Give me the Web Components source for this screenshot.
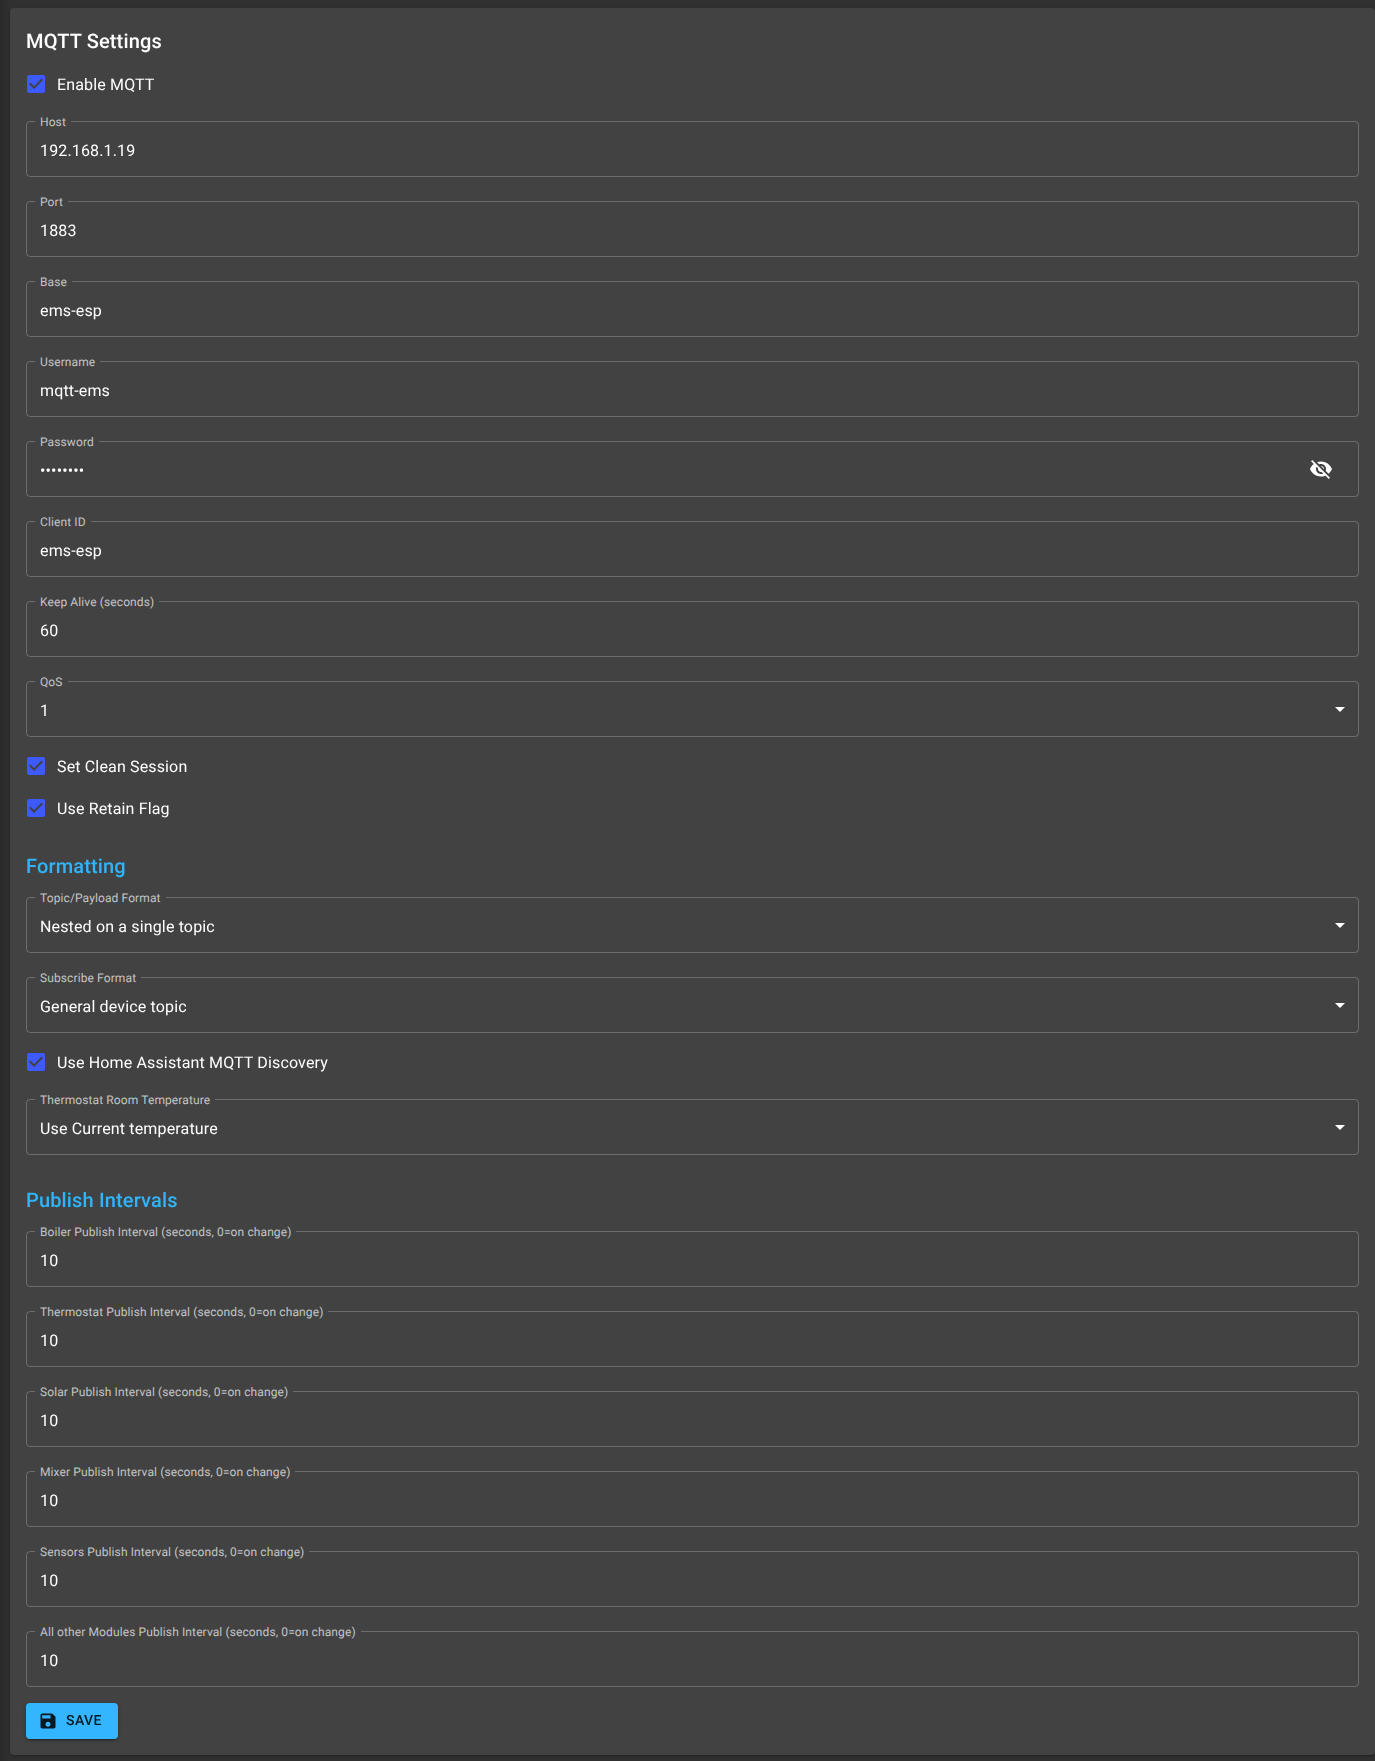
<!DOCTYPE html>
<html>
<head>
<meta charset="utf-8">
<title>MQTT Settings</title>
<style>
  html, body { margin: 0; padding: 0; background: #303030; }
  body { font-family: Roboto, "Liberation Sans", sans-serif; color: #fff; text-rendering: geometricPrecision; }
</style>
</head>
<body>
<mqtt-settings></mqtt-settings>

<script>
class OutlinedField extends HTMLElement {
  constructor() {
    super();
    this.attachShadow({mode: 'open'}).innerHTML = `
      <style>
        :host { display: block; position: relative; flex: none; height: 56px; box-sizing: border-box; margin: 16px 0 8px; border: 1px solid rgba(255,255,255,0.23); border-radius: 4px; }
        .label { position: absolute; left: 8px; top: -7px; padding: 0 5px; background: #424242; font-size: 12px; line-height: 14px; letter-spacing: 0.11px; color: rgba(255,255,255,0.7); white-space: nowrap; }
        .row { display: flex; align-items: center; height: 100%; padding: 2px 6px 0 13px; box-sizing: border-box; }
        .value { flex: 1; font-size: 16px; line-height: 19px; color: #fff; letter-spacing: 0.15px; white-space: nowrap; }
        .end { display: block; margin-top: -2px; }
      </style>
      <span class="label"></span>
      <div class="row">
        <div class="value"><slot></slot></div>
        <div class="end"><slot name="end"></slot></div>
      </div>
    `;
    this.shadowRoot.querySelector('.label').textContent = this.getAttribute('label');
  }
}
customElements.define('outlined-field', OutlinedField);

class CheckRow extends HTMLElement {
  constructor() {
    super();
    this.attachShadow({mode: 'open'}).innerHTML = `
      <style>
        :host { display: flex; flex: none; align-items: center; height: 42px; font-size: 16px; letter-spacing: 0.15px; color: #fff; }
        svg { display: block; width: 24px; height: 24px; margin: 0 9px 0 -2px; fill: #3d5afe; flex: none; }
      </style>
      <svg viewBox="0 0 24 24"><path d="M19 3H5c-1.11 0-2 .9-2 2v14c0 1.1.89 2 2 2h14c1.1 0 2-.9 2-2V5c0-1.1-.89-2-2-2zm-9 14l-5-5 1.41-1.41L10 14.17l7.59-7.59L19 8l-9 9z"/></svg>
      <span><slot></slot></span>
    `;
  }
}
customElements.define('check-row', CheckRow);

class SectionHeading extends HTMLElement {
  constructor() {
    super();
    this.attachShadow({mode: 'open'}).innerHTML = `
      <style>
        :host { display: block; flex: none; margin: 21px 0 -1px; font-size: 20px; font-weight: 500; line-height: 32px; letter-spacing: 0.15px; color: #2fb5fc; }
      </style>
      <slot></slot>
    `;
  }
}
customElements.define('section-heading', SectionHeading);

class SaveButton extends HTMLElement {
  constructor() {
    super();
    this.attachShadow({mode: 'open'}).innerHTML = `
      <style>
        :host { display: inline-flex; flex: none; align-self: flex-start; align-items: center; height: 36px; box-sizing: border-box; padding: 0 16px 0 12px; margin-top: 8px; border-radius: 4px; background: #33b6ff; color: rgba(0,0,0,0.87); font-size: 14px; font-weight: 500; letter-spacing: 0.4px; box-shadow: 0 3px 1px -2px rgba(0,0,0,0.2), 0 2px 2px 0 rgba(0,0,0,0.14), 0 1px 5px 0 rgba(0,0,0,0.12); }
        svg { display: block; width: 20px; height: 20px; margin-right: 8px; fill: rgba(0,0,0,0.87); }
      </style>
      <svg viewBox="0 0 24 24"><path d="M17 3H5c-1.11 0-2 .9-2 2v14c0 1.1.89 2 2 2h14c1.1 0 2-.9 2-2V7l-4-4zm-5 16c-1.66 0-3-1.34-3-3s1.34-3 3-3 3 1.34 3 3-1.34 3-3 3zm3-10H5V5h10v4z"/></svg>
      <slot></slot>
    `;
  }
}
customElements.define('save-button', SaveButton);

const arrow = `<svg slot="end" width="24" height="24" viewBox="0 0 24 24" fill="#fff" style="display:block"><path d="M7 10l5 5 5-5z"/></svg>`;
const eyeOff = `<svg slot="end" width="24" height="24" viewBox="0 0 24 24" fill="#fff" style="display:block;margin-right:19px"><path d="M12 7c2.76 0 5 2.24 5 5 0 .65-.13 1.26-.36 1.83l2.92 2.92c1.51-1.26 2.7-2.89 3.43-4.75-1.73-4.39-6-7.5-11-7.5-1.4 0-2.74.25-3.98.7l2.16 2.16C10.74 7.13 11.35 7 12 7zM2 4.27l2.28 2.28.46.46C3.08 8.3 1.78 10.02 1 12c1.73 4.39 6 7.5 11 7.5 1.55 0 3.03-.3 4.38-.84l.42.42L19.73 22 21 20.73 3.27 3 2 4.27zM7.53 9.8l1.55 1.55c-.05.21-.08.43-.08.65 0 1.66 1.34 3 3 3 .22 0 .44-.03.65-.08l1.55 1.55c-.67.33-1.41.53-2.2.53-2.76 0-5-2.24-5-5 0-.79.2-1.53.53-2.2zm4.31-.78l3.15 3.15.02-.16c0-1.66-1.34-3-3-3l-.17.01z"/></svg>`;

class MqttSettings extends HTMLElement {
  constructor() {
    super();
    this.attachShadow({mode: 'open'}).innerHTML = `
      <style>
        :host { display: block; padding: 8px 0 6px 10px; background: linear-gradient(90deg, #2a2a2a, #303030 10px); }
        .paper { display: flex; flex-direction: column; background: #424242; border-radius: 4px; padding: 16px; box-shadow: 0 1px 3px rgba(0,0,0,0.3); will-change: opacity; }
        h6 { margin: 1px 0 6px; font-size: 20px; font-weight: 500; line-height: 32px; letter-spacing: 0.15px; color: #fff; }
      </style>
      <div class="paper">
        <h6>MQTT Settings</h6>
        <check-row>Enable MQTT</check-row>
        <outlined-field label="Host">192.168.1.19</outlined-field>
        <outlined-field label="Port">1883</outlined-field>
        <outlined-field label="Base">ems-esp</outlined-field>
        <outlined-field label="Username">mqtt-ems</outlined-field>
        <outlined-field label="Password">••••••••${eyeOff}</outlined-field>
        <outlined-field label="Client ID">ems-esp</outlined-field>
        <outlined-field label="Keep Alive (seconds)">60</outlined-field>
        <outlined-field label="QoS">1${arrow}</outlined-field>
        <check-row>Set Clean Session</check-row>
        <check-row>Use Retain Flag</check-row>
        <section-heading>Formatting</section-heading>
        <outlined-field label="Topic/Payload Format">Nested on a single topic${arrow}</outlined-field>
        <outlined-field label="Subscribe Format">General device topic${arrow}</outlined-field>
        <check-row>Use Home Assistant MQTT Discovery</check-row>
        <outlined-field label="Thermostat Room Temperature">Use Current temperature${arrow}</outlined-field>
        <section-heading>Publish Intervals</section-heading>
        <outlined-field label="Boiler Publish Interval (seconds, 0=on change)">10</outlined-field>
        <outlined-field label="Thermostat Publish Interval (seconds, 0=on change)">10</outlined-field>
        <outlined-field label="Solar Publish Interval (seconds, 0=on change)">10</outlined-field>
        <outlined-field label="Mixer Publish Interval (seconds, 0=on change)">10</outlined-field>
        <outlined-field label="Sensors Publish Interval (seconds, 0=on change)">10</outlined-field>
        <outlined-field label="All other Modules Publish Interval (seconds, 0=on change)">10</outlined-field>
        <save-button>SAVE</save-button>
      </div>
    `;
  }
}
customElements.define('mqtt-settings', MqttSettings);
</script>
</body>
</html>
